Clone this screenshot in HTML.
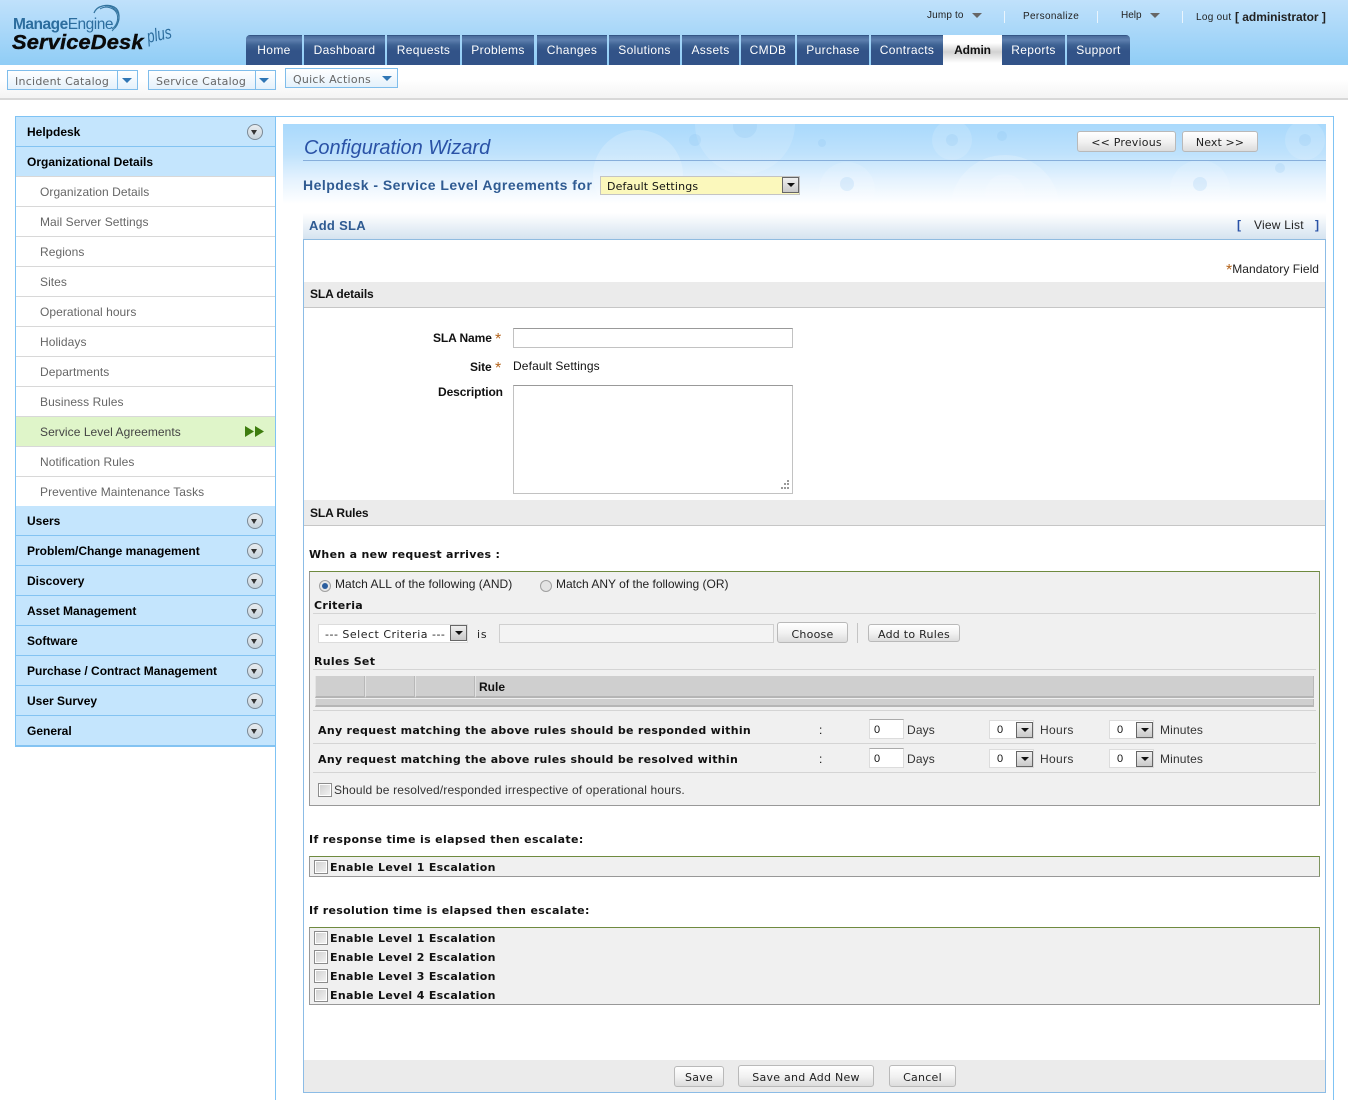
<!DOCTYPE html>
<html><head><meta charset="utf-8"><title>Configuration Wizard</title>
<style>
html,body{margin:0;padding:0;background:#fff}
body{width:1348px;height:1100px;position:relative;overflow:hidden;font-family:"Liberation Sans",sans-serif;font-size:12px;color:#111}
div,span.a{position:absolute;box-sizing:border-box}
.t{position:absolute;white-space:nowrap;line-height:14px;height:14px}
.v{font-family:"DejaVu Sans",sans-serif;font-size:11px}
.vb{font-family:"DejaVu Sans",sans-serif;font-size:11px;font-weight:bold;color:#111;letter-spacing:.3px;margin-top:1px}
.b{font-weight:bold}
.tab{top:35px;height:30px;background:linear-gradient(#1f3f70 0,#4a6c9c 1px,#5d7fae 5px,#3e6293 10px,#325388 16px,#325388 100%);color:#fff;font-family:"Liberation Sans",sans-serif;font-size:12px;text-align:center;line-height:31px;letter-spacing:.35px}
.hd{left:16px;width:259px;height:30px;background:#c4e5fd;border-bottom:1px solid #83c3f2;font-weight:bold;font-size:12px;line-height:31px;padding-left:11px;color:#000}
.it{left:16px;width:259px;height:30px;background:#fff;border-bottom:1px solid #d8d8d8;color:#666;font-size:12px;line-height:30px;padding-left:24px;letter-spacing:.06px}
.ci{left:231px;top:7px;width:16px;height:16px;border:1.5px solid #7c8a96;border-radius:50%;background:linear-gradient(#e9edf0,#c6d3dc)}
.ci:after{content:"";position:absolute;left:3px;top:5px;border:3.5px solid transparent;border-top:5px solid #333;border-bottom:0}
.cb{height:20px;border:1px solid #7fbdeb;background:linear-gradient(#fff,#e4f1fb);color:#666;font-family:"DejaVu Sans",sans-serif;font-size:11px;line-height:21px;letter-spacing:.25px}
.tri{width:0;height:0;border:5px solid transparent;border-top:5px solid #2f76b5;border-bottom:0}
.btn{height:21px;border:1px solid #b9b9b9;border-radius:3px;background:linear-gradient(#fff,#f2f2f2 50%,#dcdcdc);font-family:"DejaVu Sans",sans-serif;font-size:11px;line-height:20px;text-align:center;color:#222;letter-spacing:.25px}
.fld{background:#fff;border:1px solid #c2c2c2;border-top:1px solid #999}
.ar{width:17px;height:16px;background:linear-gradient(#efefef,#c9c9c9);border:1px solid #666}
.ar:after{content:"";position:absolute;left:4px;top:5px;border:4px solid transparent;border-top:4px solid #111;border-bottom:0}
.chk{width:14px;height:14px;border:1px solid #8c8c8c;background:linear-gradient(135deg,#cfcfcf,#f4f4f4);box-shadow:inset 0 0 0 1px #fff}
.ln{height:1px;background:#d4d4d4}
.band{left:304px;width:1021px;height:26px;background:#ebebeb;border-bottom:1px solid #c6c6c6;font-weight:bold;line-height:24px;padding-left:6px;color:#111;letter-spacing:-.12px}
.star{color:#b5651d;font-weight:normal;font-size:16px;line-height:10px;position:relative;top:2px}
.th{top:676px;height:22px;background:#cfcfcf;border-left:1px solid #e4e4e4;border-right:1px solid #b8b8b8;border-bottom:2px solid #b5b5b5}
.l{color:#333;letter-spacing:.15px}
.z{border-color:#dcdcdc;font-size:11px;line-height:19px;padding-left:7px}
</style></head>
<body>
<!-- Header -->
<div style="left:0;top:0;width:1348px;height:65px;background:linear-gradient(#c0e1fb,#90cdf6)"></div>
<svg style="position:absolute;left:0;top:0" width="190" height="60" viewBox="0 0 190 60">
<g fill="none" stroke="#33749f"><path d="M94 13C97 5 108 4 114 7C120 10 121 20 115 28" stroke-width="1.3"/><path d="M100 9C106 5 115 8 117 14C119 20 116 26 112 29" stroke-width="1"/><path d="M105 6C112 5 119 11 119 18C119 23 116 27 112 31" stroke-width="1"/></g></svg>
<div class="t b" style="left:13px;top:17px;font-size:15.5px;line-height:16px;height:16px;color:#2c6d9e;letter-spacing:-.5px">Manage<span style="font-weight:normal">Engine</span></div>
<div class="t b" style="left:12px;top:32px;font-size:20.5px;line-height:22px;height:22px;font-style:italic;color:#0a0a0a;letter-spacing:.15px;transform:scaleX(1.065);transform-origin:left center;-webkit-text-stroke:.4px #0a0a0a">ServiceDesk</div>
<div class="t" style="left:147px;top:27px;font-size:18px;line-height:20px;height:20px;font-style:italic;color:#2c6d9e;transform:rotate(-12deg) scaleX(.75);transform-origin:left center">plus</div>

<div class="tab" style="left:246px;width:56px;border-radius:4px 0 0 0">Home</div>
<div class="tab" style="left:304px;width:81px">Dashboard</div>
<div class="tab" style="left:387px;width:73px">Requests</div>
<div class="tab" style="left:462px;width:72px">Problems</div>
<div class="tab" style="left:537px;width:70px">Changes</div>
<div class="tab" style="left:609px;width:71px">Solutions</div>
<div class="tab" style="left:682px;width:57px">Assets</div>
<div class="tab" style="left:741px;width:54px">CMDB</div>
<div class="tab" style="left:797px;width:72px">Purchase</div>
<div class="tab" style="left:871px;width:72px">Contracts</div>
<div class="tab" style="left:943px;width:59px;background:linear-gradient(#fff 0,#fff 8px,#d2d2d2 17px,#fff 28px);color:#111;font-weight:bold;letter-spacing:-.1px">Admin</div>
<div class="tab" style="left:1002px;width:63px">Reports</div>
<div class="tab" style="left:1067px;width:63px;border-radius:0 4px 0 0">Support</div>

<div class="t" style="left:927px;top:9px;font-size:10px;color:#222;letter-spacing:.15px">Jump to</div>
<div class="a" style="left:972px;top:13px;width:0;height:0;border:5px solid transparent;border-top:5px solid #666;border-bottom:0"></div>
<div style="left:1004px;top:11px;width:1px;height:12px;background:#eaf5fd"></div>
<div class="t" style="left:1023px;top:10px;font-size:10px;color:#222;letter-spacing:.35px">Personalize</div>
<div style="left:1097px;top:11px;width:1px;height:12px;background:#eaf5fd"></div>
<div class="t" style="left:1121px;top:9px;font-size:10px;color:#222">Help</div>
<div class="a" style="left:1150px;top:13px;width:0;height:0;border:5px solid transparent;border-top:5px solid #666;border-bottom:0"></div>
<div style="left:1182px;top:11px;width:1px;height:12px;background:#eaf5fd"></div>
<div class="t" style="left:1196px;top:11px;font-size:10px;color:#222;letter-spacing:.3px">Log out</div>
<div class="t b" style="left:1235px;top:10px;color:#222;letter-spacing:-.03px">[ administrator ]</div>

<!-- Toolbar -->
<div style="left:0;top:65px;width:1348px;height:35px;background:linear-gradient(#fff 0,#fff 15px,#f4f4f4 32px);border-bottom:2px solid #d8d8d8"></div>
<div class="cb" style="left:7px;top:70px;width:131px;padding-left:7px">Incident Catalog<div style="left:109px;top:0;width:1px;height:18px;background:#7fbdeb"></div><div class="tri" style="left:114px;top:7px"></div></div>
<div class="cb" style="left:148px;top:70px;width:128px;padding-left:7px">Service Catalog<div style="left:106px;top:0;width:1px;height:18px;background:#7fbdeb"></div><div class="tri" style="left:110px;top:7px"></div></div>
<div class="cb" style="left:285px;top:68px;width:113px;padding-left:7px">Quick Actions<div class="tri" style="left:96px;top:7px"></div></div>

<!-- Outer frames -->
<div style="left:15px;top:116px;width:1319px;height:1px;background:#7fc3f4"></div>
<div style="left:15px;top:116px;width:1px;height:631px;background:#7fc3f4"></div>
<div style="left:275px;top:116px;width:1px;height:984px;background:#7fc3f4"></div>
<div style="left:1333px;top:116px;width:1px;height:984px;background:#7fc3f4"></div>

<!-- Sidebar -->
<div class="hd" style="top:117px">Helpdesk<div class="ci"></div></div>
<div class="hd" style="top:147px;border-bottom:1px solid #d8d8d8">Organizational Details</div>
<div class="it" style="top:177px">Organization Details</div>
<div class="it" style="top:207px">Mail Server Settings</div>
<div class="it" style="top:237px">Regions</div>
<div class="it" style="top:267px">Sites</div>
<div class="it" style="top:297px">Operational hours</div>
<div class="it" style="top:327px">Holidays</div>
<div class="it" style="top:357px">Departments</div>
<div class="it" style="top:387px">Business Rules</div>
<div class="it" style="top:417px;background:#dff5c9;color:#444">Service Level Agreements
<svg style="position:absolute;left:229px;top:9px" width="19" height="11"><path d="M0 0L9 5.5L0 11Z M10 0L19 5.5L10 11Z" fill="#3e7d0f"/></svg></div>
<div class="it" style="top:447px">Notification Rules</div>
<div class="it" style="top:477px;height:29px;border:0">Preventive Maintenance Tasks</div>
<div class="hd" style="top:506px">Users<div class="ci"></div></div>
<div class="hd" style="top:536px">Problem/Change management<div class="ci"></div></div>
<div class="hd" style="top:566px">Discovery<div class="ci"></div></div>
<div class="hd" style="top:596px">Asset Management<div class="ci"></div></div>
<div class="hd" style="top:626px">Software<div class="ci"></div></div>
<div class="hd" style="top:656px">Purchase / Contract Management<div class="ci"></div></div>
<div class="hd" style="top:686px">User Survey<div class="ci"></div></div>
<div class="hd" style="top:716px;height:31px;border-bottom:2px solid #83c3f2">General<div class="ci"></div></div>

<!-- Main header -->
<div style="left:283px;top:124px;width:1043px;height:80px;background:linear-gradient(#a9d9fc 0,#bfe2fc 30px,#e4f2fe 55px,#fff 80px);overflow:hidden">
<svg width="1043" height="80" style="position:absolute;left:0;top:0"><g fill="#fff" fill-opacity=".2">
<circle cx="355" cy="51" r="45"/><circle cx="722" cy="86" r="55"/></g>
<g fill="#fff" fill-opacity=".14"><circle cx="462" cy="0" r="50"/><circle cx="564" cy="66" r="28"/><circle cx="669" cy="16" r="20"/><circle cx="917" cy="66" r="30"/><circle cx="1022" cy="16" r="20"/><circle cx="722" cy="70" r="20"/></g>
<g fill="#7fbff0" fill-opacity=".18"><circle cx="462" cy="2" r="12"/><circle cx="412" cy="16" r="6"/><circle cx="539" cy="19" r="4"/><circle cx="719" cy="12" r="5"/><circle cx="997" cy="44" r="5"/><circle cx="669" cy="16" r="6"/><circle cx="1022" cy="16" r="6"/><circle cx="564" cy="60" r="7"/><circle cx="917" cy="60" r="7"/></g></svg>
</div>
<div class="t" style="left:304px;top:136px;height:24px;line-height:24px;font-size:20px;font-style:italic;color:#2a52a6;letter-spacing:-.02px">Configuration Wizard</div>
<div style="left:303px;top:160px;width:1023px;height:1px;background:#86aedb"></div>
<div class="btn" style="left:1077px;top:131px;width:99px;letter-spacing:.2px;line-height:21px">&lt;&lt; Previous</div>
<div class="btn" style="left:1182px;top:131px;width:76px;letter-spacing:.1px;line-height:21px">Next &gt;&gt;</div>
<div class="t" style="left:303px;top:178px;font-size:14px;font-weight:bold;color:#2f5b92;letter-spacing:.47px">Helpdesk - Service Level Agreements for</div>
<div class="a" style="left:600px;top:176px;width:200px;height:19px;background:#fbf8bc;border:1px solid #c4c4c4;font-family:'DejaVu Sans',sans-serif;font-size:11px;line-height:20px;padding-left:6px;color:#111;letter-spacing:.15px">Default Settings<div class="ar" style="left:181px;top:0"></div></div>

<!-- Add SLA bar -->
<div style="left:303px;top:210px;width:1023px;height:30px;background:linear-gradient(#fff,#fff 10%,#d5e3f0);border-bottom:1px solid #8fbbe0"></div>
<div class="t" style="left:309px;top:219px;font-size:13px;font-weight:bold;color:#2f5b92;letter-spacing:.3px">Add SLA</div>
<div class="t b" style="left:1237px;top:218px;font-size:12px;color:#2a52a6">[</div>
<div class="t" style="left:1254px;top:218px;font-size:12px;color:#222;letter-spacing:.22px">View List</div>
<div class="t b" style="left:1315px;top:218px;font-size:12px;color:#2a52a6">]</div>

<!-- Content box -->
<div style="left:303px;top:240px;width:1023px;height:853px;border:1px solid #8cbce6;border-top:0;background:#fff"></div>
<div class="t" style="left:1226px;top:262px;color:#222"><span class="star">*</span><span style="letter-spacing:.05px">Mandatory Field</span></div>
<div class="band" style="top:282px">SLA details</div>

<div class="t b" style="left:433px;top:331px;letter-spacing:-.1px">SLA Name</div><div class="t" style="left:495px;top:331px"><span class="star">*</span></div>
<div class="fld" style="left:513px;top:328px;width:280px;height:20px"></div>
<div class="t b" style="left:470px;top:360px;letter-spacing:-.1px">Site</div><div class="t" style="left:495px;top:360px"><span class="star">*</span></div>
<div class="t" style="left:513px;top:359px;letter-spacing:.13px">Default Settings</div>
<div class="t b" style="left:438px;top:385px;letter-spacing:-.1px">Description</div>
<div class="fld" style="left:513px;top:385px;width:280px;height:109px"></div>
<svg style="position:absolute;left:778px;top:479px" width="13" height="13"><g fill="#999"><rect x="9" y="1" width="2" height="2"/><rect x="6" y="4" width="2" height="2"/><rect x="9" y="4" width="2" height="2"/><rect x="3" y="8" width="2" height="2"/><rect x="6" y="8" width="2" height="2"/><rect x="9" y="8" width="2" height="2"/></g></svg>

<div class="band" style="top:500px;line-height:26px">SLA Rules</div>
<div class="t vb" style="left:309px;top:547px">When a new request arrives :</div>

<!-- Rules box -->
<div style="left:309px;top:571px;width:1011px;height:235px;background:#f0f0f0;border:1px solid #989898;border-top:1px solid #6f8a3f;border-right-color:#7f9460"></div>
<svg style="position:absolute;left:318px;top:579px" width="14" height="14"><circle cx="7" cy="7" r="5.5" fill="#e8e8e8" stroke="#a0a0a0"/><circle cx="7" cy="7" r="3" fill="#2b5e9e"/></svg>
<div class="t" style="left:335px;top:577px;color:#222;letter-spacing:.03px">Match ALL of the following (AND)</div>
<svg style="position:absolute;left:539px;top:579px" width="14" height="14"><circle cx="7" cy="7" r="5.5" fill="#e4e4e4" stroke="#a0a0a0"/></svg>
<div class="t" style="left:556px;top:577px;color:#222">Match ANY of the following (OR)</div>
<div class="t vb" style="left:314px;top:598px">Criteria</div>
<div class="ln" style="left:313px;top:613px;width:1003px"></div>
<div class="a" style="left:318px;top:624px;width:150px;height:19px;background:#fff;border:1px solid #dcdcdc;font-family:'DejaVu Sans',sans-serif;font-size:11px;line-height:20px;padding-left:6px;color:#222;letter-spacing:.5px;white-space:nowrap">--- Select Criteria ---<div class="ar" style="left:131px;top:0"></div></div>
<div class="t v" style="left:477px;top:628px;color:#222;letter-spacing:.8px">is</div>
<div class="a" style="left:499px;top:624px;width:275px;height:19px;background:#f3f3f3;border:1px solid #cfcfcf"></div>
<div class="btn" style="left:777px;top:622px;width:71px;line-height:23px">Choose</div>
<div style="left:857px;top:623px;width:1px;height:20px;background:#c4c4c4"></div>
<div class="btn" style="left:868px;top:624px;width:92px;height:18px;line-height:20px">Add to Rules</div>
<div class="t vb" style="left:314px;top:654px">Rules Set</div>
<div class="ln" style="left:313px;top:669px;width:1003px"></div>
<div class="th" style="left:315px;width:50px"></div>
<div class="th" style="left:365px;width:50px"></div>
<div class="th" style="left:415px;width:60px"></div>
<div class="th" style="left:475px;width:839px"></div>
<div class="t b" style="left:479px;top:680px">Rule</div>
<div style="left:315px;top:699px;width:999px;height:8px;background:#cfcfcf;border-bottom:2px solid #b5b5b5;border-right:1px solid #b8b8b8;border-left:1px solid #e4e4e4"></div>
<div class="ln" style="left:313px;top:710px;width:1003px"></div>

<div class="t vb" style="left:318px;top:723px">Any request matching the above rules should be responded within</div>
<div class="t" style="left:819px;top:723px">:</div>
<div class="fld z" style="left:869px;top:719px;width:35px;height:20px;border-top-color:#aaa;line-height:20px;padding-left:4px">0</div>
<div class="t l" style="left:907px;top:723px">Days</div>
<div class="fld z" style="left:989px;top:720px;width:45px;height:19px">0<div class="ar" style="left:26px;top:1px"></div></div>
<div class="t l" style="left:1040px;top:723px;letter-spacing:.35px">Hours</div>
<div class="fld z" style="left:1109px;top:720px;width:45px;height:19px">0<div class="ar" style="left:26px;top:1px"></div></div>
<div class="t l" style="left:1160px;top:723px">Minutes</div>
<div class="ln" style="left:313px;top:743px;width:1003px"></div>

<div class="t vb" style="left:318px;top:752px">Any request matching the above rules should be resolved within</div>
<div class="t" style="left:819px;top:752px">:</div>
<div class="fld z" style="left:869px;top:748px;width:35px;height:20px;border-top-color:#aaa;line-height:20px;padding-left:4px">0</div>
<div class="t l" style="left:907px;top:752px">Days</div>
<div class="fld z" style="left:989px;top:749px;width:45px;height:19px">0<div class="ar" style="left:26px;top:1px"></div></div>
<div class="t l" style="left:1040px;top:752px;letter-spacing:.35px">Hours</div>
<div class="fld z" style="left:1109px;top:749px;width:45px;height:19px">0<div class="ar" style="left:26px;top:1px"></div></div>
<div class="t l" style="left:1160px;top:752px">Minutes</div>
<div class="ln" style="left:313px;top:772px;width:1003px"></div>
<div class="chk" style="left:318px;top:783px"></div>
<div class="t" style="left:334px;top:783px;color:#333;letter-spacing:.17px">Should be resolved/responded irrespective of operational hours.</div>

<!-- Escalation -->
<div class="t vb" style="left:309px;top:832px;letter-spacing:.35px">If response time is elapsed then escalate:</div>
<div style="left:309px;top:856px;width:1011px;height:21px;background:#f0f0f0;border:1px solid #989898;border-top:1px solid #6f8a3f;border-right-color:#7f9460"></div>
<div class="chk" style="left:314px;top:860px"></div>
<div class="t vb" style="left:330px;top:860px;letter-spacing:.33px">Enable Level 1 Escalation</div>

<div class="t vb" style="left:309px;top:903px;letter-spacing:.33px">If resolution time is elapsed then escalate:</div>
<div style="left:309px;top:927px;width:1011px;height:78px;background:#f0f0f0;border:1px solid #989898;border-top:1px solid #6f8a3f;border-right-color:#7f9460"></div>
<div class="chk" style="left:314px;top:931px"></div><div class="t vb" style="left:330px;top:931px;letter-spacing:.33px">Enable Level 1 Escalation</div>
<div class="chk" style="left:314px;top:950px"></div><div class="t vb" style="left:330px;top:950px;letter-spacing:.33px">Enable Level 2 Escalation</div>
<div class="chk" style="left:314px;top:969px"></div><div class="t vb" style="left:330px;top:969px;letter-spacing:.33px">Enable Level 3 Escalation</div>
<div class="chk" style="left:314px;top:988px"></div><div class="t vb" style="left:330px;top:988px;letter-spacing:.33px">Enable Level 4 Escalation</div>

<!-- Footer -->
<div style="left:304px;top:1060px;width:1021px;height:32px;background:#ebebeb"></div>
<div class="btn" style="left:674px;top:1066px;width:50px;line-height:21px">Save</div>
<div class="btn" style="left:738px;top:1065px;width:136px;height:22px;line-height:23px">Save and Add New</div>
<div class="btn" style="left:889px;top:1065px;width:67px;height:22px;line-height:23px">Cancel</div>
</body></html>
